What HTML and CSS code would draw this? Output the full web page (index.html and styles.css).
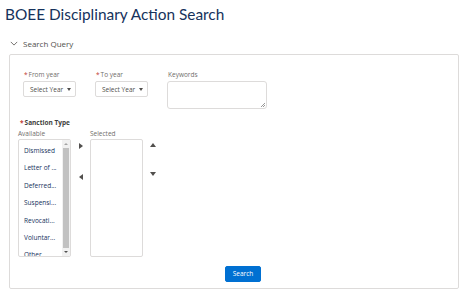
FILE: index.html
```html
<!DOCTYPE html>
<html lang="en">
<head>
    <meta charset="UTF-8">
    <title>BOEE Disciplinary Action Search</title>
    <link rel="stylesheet" href="styles.css">
</head>
<body>
    <h1 class="page-title">BOEE Disciplinary Action Search</h1>

    <div class="section-header">
        <svg class="chevron" viewBox="0 0 10 6" width="8" height="5">
            <path d="M1 1 L5 5 L9 1" fill="none" stroke="#706e6b" stroke-width="1.2"/>
        </svg>
        <span>Search Query</span>
    </div>

    <div class="query-card">
        <div class="field-row">
            <div class="field field-year">
                <label class="field-label"><abbr class="required">*</abbr>From year</label>
                <div class="select-box">Select Year <span class="caret"></span></div>
            </div>
            <div class="field field-year">
                <label class="field-label"><abbr class="required">*</abbr>To year</label>
                <div class="select-box">Select Year <span class="caret"></span></div>
            </div>
            <div class="field field-keywords">
                <label class="field-label">Keywords</label>
                <div class="textarea-box"><span class="grip"></span></div>
            </div>
        </div>

        <div class="sanction">
            <div class="sanction-title"><abbr class="required">*</abbr>Sanction Type</div>
            <div class="dual-listbox">
                <div class="list-col">
                    <div class="list-label">Available</div>
                    <div class="listbox">
                        <ul class="options">
                            <li>Dismissed</li>
                            <li>Letter of ...</li>
                            <li>Deferred...</li>
                            <li>Suspensi...</li>
                            <li>Revocati...</li>
                            <li>Voluntar...</li>
                            <li>Other</li>
                        </ul>
                        <div class="scrollbar">
                            <span class="sb-arrow sb-up"></span>
                            <span class="sb-thumb"></span>
                            <span class="sb-arrow sb-down"></span>
                        </div>
                    </div>
                </div>
                <div class="move-buttons">
                    <span class="tri tri-right"></span>
                    <span class="tri tri-left"></span>
                </div>
                <div class="list-col">
                    <div class="list-label">Selected</div>
                    <div class="listbox listbox-selected"></div>
                </div>
                <div class="move-buttons order-buttons">
                    <span class="tri tri-up"></span>
                    <span class="tri tri-down"></span>
                </div>
            </div>
        </div>

        <div class="actions">
            <button class="search-button" type="button">Search</button>
        </div>
    </div>
</body>
</html>
```

FILE: styles.css
```css
body {
    margin: 0;
    padding: 0;
    font-family: "Open Sans", Arial, sans-serif;
    background-color: #fff;
    color: #3e3e3c;
}

.page-title {
    margin: 0;
    padding: 4px 0 0 5px;
    font-family: Lato, "Open Sans", sans-serif;
    font-size: 15.4px;
    line-height: 20px;
    font-weight: 400;
    color: #16325c;
}

.section-header {
    display: flex;
    align-items: center;
    margin-top: 13px;
    padding-left: 10px;
    height: 12px;
    font-size: 8px;
    color: #514f4d;
}

.chevron {
    margin-right: 5px;
}

.query-card {
    margin: 5px 6px 0 9px;
    height: 235px;
    border: 1px solid #dddbda;
    border-radius: 2px;
    box-sizing: border-box;
    padding-top: 15px;
}

.field-row {
    display: flex;
    padding-left: 13px;
}

.field {
    display: flex;
    flex-direction: column;
}

.field-year {
    width: 72px;
}

.field-label {
    font-size: 6.5px;
    line-height: 10px;
    color: #706e6b;
    padding-left: 1px;
}

.required {
    color: #c23934;
    text-decoration: none;
    margin-right: 1px;
}

.select-box {
    display: flex;
    align-items: center;
    justify-content: space-between;
    width: 53px;
    height: 16px;
    margin-top: 1px;
    box-sizing: border-box;
    border: 1px solid #dddbda;
    border-radius: 2px;
    padding: 0 4px 0 6px;
    font-size: 6.5px;
    white-space: nowrap;
    color: #514f4d;
}

.caret {
    width: 0;
    height: 0;
    border-left: 2.5px solid transparent;
    border-right: 2.5px solid transparent;
    border-top: 3.5px solid #514f4d;
}

.field-keywords {
    width: 100px;
}

.textarea-box {
    position: relative;
    width: 100px;
    height: 28px;
    margin-top: 1px;
    box-sizing: border-box;
    border: 1px solid #dddbda;
    border-radius: 3px;
}

.grip {
    position: absolute;
    right: 1px;
    bottom: 1px;
    width: 4px;
    height: 4px;
    background: linear-gradient(135deg, transparent 45%, #999 45%, #999 55%, transparent 55%, transparent 75%, #999 75%, #999 85%, transparent 85%);
}

.sanction {
    padding-left: 8px;
    margin-top: 9px;
}

.sanction-title {
    font-size: 6.5px;
    font-weight: 700;
    line-height: 10px;
    color: #3e3e3c;
    padding-left: 2px;
}

.dual-listbox {
    display: flex;
    align-items: flex-start;
}

.list-col {
    display: flex;
    flex-direction: column;
}

.list-label {
    font-size: 6.5px;
    line-height: 10px;
    height: 10px;
    color: #706e6b;
    margin-top: 1px;
}

.listbox {
    display: flex;
    width: 53px;
    height: 118px;
    box-sizing: border-box;
    border: 1px solid #dddbda;
    border-radius: 2px;
    overflow: hidden;
}

.listbox-selected {
    width: 53px;
}

.options {
    flex: 1;
    min-width: 0;
    list-style: none;
    margin: 0;
    padding: 2px 0 0 5px;
    font-size: 6.5px;
    color: #16325c;
}

.options li {
    height: 17.4px;
    line-height: 17.4px;
    white-space: nowrap;
}

.scrollbar {
    display: flex;
    flex-direction: column;
    align-items: center;
    width: 8px;
    flex-shrink: 0;
    background: #f1f1f1;
}

.sb-arrow {
    width: 0;
    height: 0;
    margin: 3px 0;
    border-left: 2px solid transparent;
    border-right: 2px solid transparent;
}

.sb-up {
    border-bottom: 2px solid #a3a3a3;
}

.sb-down {
    border-top: 2px solid #505050;
}

.sb-thumb {
    flex: 1;
    width: 6px;
    background: #c1c1c1;
}

.move-buttons {
    display: flex;
    flex-direction: column;
    align-items: center;
    width: 19px;
    padding-top: 15px;
    gap: 25px;
}

.order-buttons {
    width: 20px;
}

.tri {
    width: 0;
    height: 0;
}

.tri-right {
    border-top: 3px solid transparent;
    border-bottom: 3px solid transparent;
    border-left: 4px solid #514f4d;
}

.tri-left {
    border-top: 3px solid transparent;
    border-bottom: 3px solid transparent;
    border-right: 4px solid #514f4d;
}

.tri-up {
    border-left: 3px solid transparent;
    border-right: 3px solid transparent;
    border-bottom: 4px solid #514f4d;
}

.tri-down {
    border-left: 3px solid transparent;
    border-right: 3px solid transparent;
    border-top: 4px solid #514f4d;
}

.actions {
    padding: 2px 0 0 215px;
}

.search-button {
    width: 36px;
    height: 16px;
    padding: 0;
    border: 1px solid #0070d2;
    border-radius: 2px;
    background: #0070d2;
    color: #fff;
    font-family: "Open Sans", Arial, sans-serif;
    font-size: 6.5px;
}
```
